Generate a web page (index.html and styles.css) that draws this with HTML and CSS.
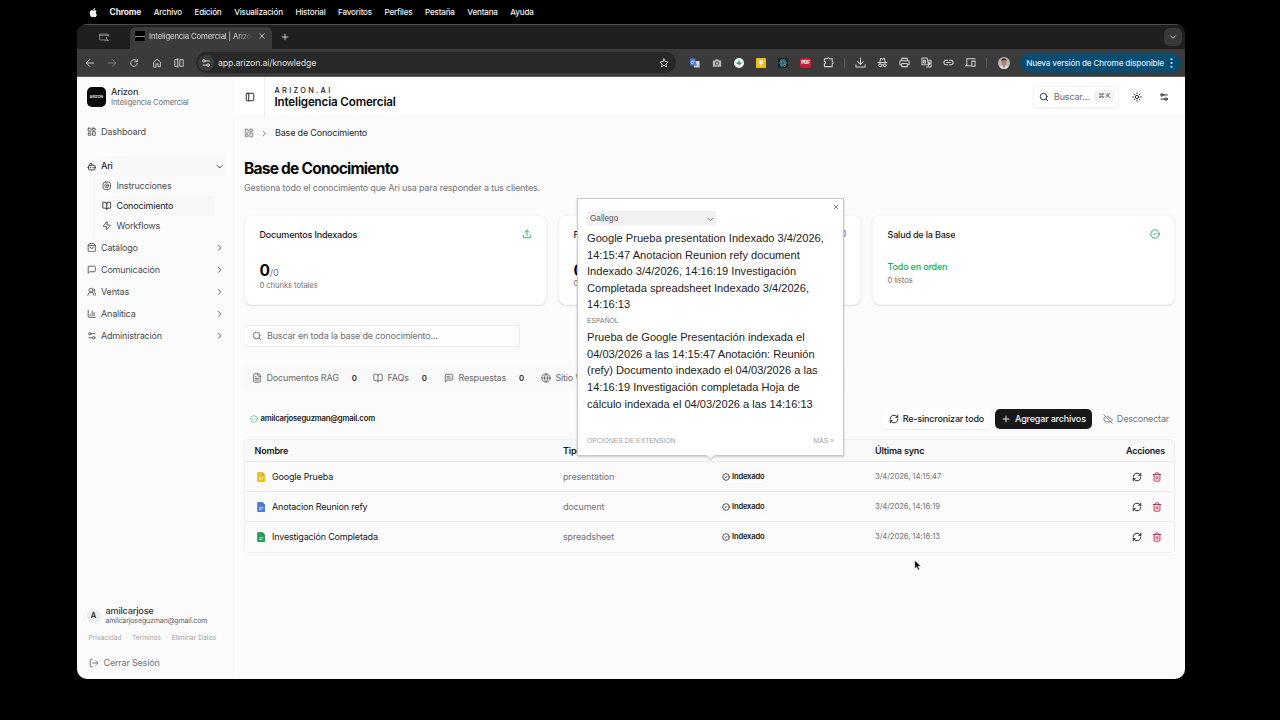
FILE: index.html
```html
<!DOCTYPE html>
<html lang="es">
<head>
  <meta charset="UTF-8" />
  <meta name="viewport" content="width=device-width, initial-scale=1.0"/>
  <title>Inteligencia Comercial | Arizon</title>
  <link rel="stylesheet" href="styles.css">
</head>
<body>
  <svg class="sprite" xmlns="http://www.w3.org/2000/svg">
    <symbol id="grid" viewBox="0 0 24 24"><rect x="3" y="3" width="7" height="9" rx="1"/><rect x="14" y="3" width="7" height="5" rx="1"/><rect x="14" y="12" width="7" height="9" rx="1"/><rect x="3" y="16" width="7" height="5" rx="1"/></symbol>
    <symbol id="bot" viewBox="0 0 24 24"><path d="M12 8V4H8"/><rect x="4" y="8" width="16" height="12" rx="2"/><path d="M2 14h2M20 14h2M15 13v2M9 13v2"/></symbol>
    <symbol id="cpu" viewBox="0 0 24 24"><rect x="2.500" y="2.500" width="19" height="19" rx="6"/><circle cx="12" cy="12" r="5"/><circle cx="12" cy="12" r="1"/></symbol>
    <symbol id="book" viewBox="0 0 24 24"><path d="M12 6v15M3 18a1 1 0 0 1-1-1V4a1 1 0 0 1 1-1h5a4 4 0 0 1 4 4 4 4 0 0 1 4-4h5a1 1 0 0 1 1 1v13a1 1 0 0 1-1 1h-6a3 3 0 0 0-3 3 3 3 0 0 0-3-3z"/></symbol>
    <symbol id="zap" viewBox="0 0 24 24"><path d="M4 14a1 1 0 0 1-.78-1.630l9.900-10.200a.5.5 0 0 1 .86.460l-1.920 6.020A1 1 0 0 0 13 10h7a1 1 0 0 1 .78 1.630l-9.900 10.200a.5.5 0 0 1-.86-.460l1.920-6.020A1 1 0 0 0 11 14z"/></symbol>
    <symbol id="bag" viewBox="0 0 24 24"><path d="M6 2 3 6v14a2 2 0 0 0 2 2h14a2 2 0 0 0 2-2V6l-3-4zM3 6h18M16 10a4 4 0 0 1-8 0"/></symbol>
    <symbol id="msg" viewBox="0 0 24 24"><path d="M21 15a2 2 0 0 1-2 2H7l-4 4V5a2 2 0 0 1 2-2h14a2 2 0 0 1 2 2z"/></symbol>
    <symbol id="msgtext" viewBox="0 0 24 24"><path d="M21 15a2 2 0 0 1-2 2H7l-4 4V5a2 2 0 0 1 2-2h14a2 2 0 0 1 2 2zM13 8H7M17 12H7"/></symbol>
    <symbol id="users" viewBox="0 0 24 24"><path d="M18 21a8 8 0 0 0-16 0"/><circle cx="10" cy="8" r="5"/><path d="M22 20c0-3.370-2-6.500-4-8a5 5 0 0 0-.45-8.300"/></symbol>
    <symbol id="chart" viewBox="0 0 24 24"><path d="M3 3v16a2 2 0 0 0 2 2h16M18 17V9M13 17V5M8 17v-3"/></symbol>
    <symbol id="sliders" viewBox="0 0 24 24"><path d="M20 7h-9M14 17H5"/><circle cx="17" cy="17" r="3"/><circle cx="7" cy="7" r="3"/></symbol>
    <symbol id="right" viewBox="0 0 24 24"><path d="m9 18 6-6-6-6"/></symbol>
    <symbol id="down" viewBox="0 0 24 24"><path d="m6 9 6 6 6-6"/></symbol>
    <symbol id="logout" viewBox="0 0 24 24"><path d="M8 21H4a1 1 0 0 1-1-1V4a1 1 0 0 1 1-1h4M16 17l5-5-5-5M21 12H9"/></symbol>
    <symbol id="panel" viewBox="0 0 24 24"><rect x="3" y="3" width="18" height="18" rx="2"/><path d="M9 3v18"/></symbol>
    <symbol id="search" viewBox="0 0 24 24"><circle cx="11" cy="11" r="8"/><path d="m21 21-4.300-4.300"/></symbol>
    <symbol id="sun" viewBox="0 0 24 24"><circle cx="12" cy="12" r="4"/><path d="M12 2v2M12 20v2M4.900 4.900l1.400 1.400M17.700 17.700l1.400 1.400M2 12h2M20 12h2M6.300 17.700l-1.400 1.400M19.100 4.900l-1.400 1.400"/></symbol>
    <symbol id="upload" viewBox="0 0 24 24"><path d="M21 15v4a2 2 0 0 1-2 2H5a2 2 0 0 1-2-2v-4M17 8l-5-5-5 5M12 3v12"/></symbol>
    <symbol id="check" viewBox="0 0 24 24"><circle cx="12" cy="12" r="10"/><path d="m9 12 2 2 4-4"/></symbol>
    <symbol id="file" viewBox="0 0 24 24"><path d="M15 2H6a2 2 0 0 0-2 2v16a2 2 0 0 0 2 2h12a2 2 0 0 0 2-2V7zM14 2v4a2 2 0 0 0 2 2h4M10 9H8M16 13H8M16 17H8"/></symbol>
    <symbol id="globe" viewBox="0 0 24 24"><circle cx="12" cy="12" r="10"/><path d="M12 2a14.500 14.500 0 0 0 0 20 14.500 14.500 0 0 0 0-20M2 12h20"/></symbol>
    <symbol id="sync" viewBox="0 0 24 24"><path d="M3 12a9 9 0 0 1 9-9 9.750 9.750 0 0 1 6.740 2.740L21 8M21 3v5h-5M21 12a9 9 0 0 1-9 9 9.750 9.750 0 0 1-6.740-2.740L3 16M8 16H3v5"/></symbol>
    <symbol id="trash" viewBox="0 0 24 24"><path d="M3 6h18M19 6v14a2 2 0 0 1-2 2H7a2 2 0 0 1-2-2V6M8 6V4a2 2 0 0 1 2-2h4a2 2 0 0 1 2 2v2M10 11v6M14 11v6"/></symbol>
    <symbol id="plus" viewBox="0 0 24 24"><path d="M5 12h14M12 5v14"/></symbol>
    <symbol id="close" viewBox="0 0 24 24"><path d="m5 5 14 14M19 5 5 19"/></symbol>
    <symbol id="cloudoff" viewBox="0 0 24 24"><path d="m2 2 20 20M5.800 5.800A7 7 0 0 0 9 19h8.500a4.500 4.500 0 0 0 1.300-.2M21.500 16.500A4.500 4.500 0 0 0 17.500 10h-1.800A7 7 0 0 0 10 5.100"/></symbol>
    <symbol id="back" viewBox="0 0 24 24"><path d="M21 12H3M11 4l-8 8 8 8"/></symbol>
    <symbol id="doc" viewBox="0 0 18 22"><path d="M2 0h9l7 7v13a2 2 0 0 1-2 2H2a2 2 0 0 1-2-2V2a2 2 0 0 1 2-2z"/><path class="fold" d="M11 0l7 7h-7z"/><path class="lines" d="M4 11.500h10v2H4zM4 15.500h7v2H4z"/></symbol>
  </svg>

  <nav class="menubar">
    <svg class="apple" viewBox="0 0 24 24"><path d="M17 12.600c0-2.500 2-3.600 2.100-3.700-1.200-1.700-3-1.900-3.600-1.900-1.500-.2-3 .9-3.700.9-.8 0-2-.9-3.200-.9-1.700 0-3.200 1-4.100 2.400-1.700 3-.4 7.500 1.200 10 .9 1.200 1.900 2.500 3.100 2.500 1.300-.1 1.700-.8 3.200-.8s1.900.8 3.200.8 2.200-1.200 3-2.400c.9-1.400 1.300-2.700 1.300-2.800 0 0-2.500-1-2.500-4.100zM14.600 5.300c.7-.8 1.100-2 1-3.100-1 0-2.200.7-2.900 1.500-.6.700-1.200 1.900-1 3 1.100.1 2.200-.6 2.900-1.400z"/></svg>
    <b>Chrome</b>
    <span>Archivo</span>
    <span>Edición</span>
    <span>Visualización</span>
    <span>Historial</span>
    <span>Favoritos</span>
    <span>Perfiles</span>
    <span>Pestaña</span>
    <span>Ventana</span>
    <span>Ayuda</span>
  </nav>

  <div class="window">
    <div class="tabs">
      <div class="tab-group"><svg class="icon" viewBox="0 0 24 24"><path d="M13 19H3a2 2 0 0 1-2-2V5h21v5M1 8h21M14 20h9M18.500 16v-3M16 20c0-5 5-5 5 0"/></svg></div>
      <div class="tab">
        <span class="favicon"></span>
        <span class="tab-title">Inteligencia Comercial | Arizo</span>
        <svg class="icon"><use href="#close"/></svg>
      </div>
      <svg class="icon new-tab"><use href="#plus"/></svg>
      <span class="tab-menu"><svg class="icon"><use href="#down"/></svg></span>
    </div>

    <div class="toolbar">
      <div class="nav">
        <svg class="icon"><use href="#back"/></svg>
        <svg class="icon dim flip"><use href="#back"/></svg>
        <svg class="icon" viewBox="0 0 24 24"><path d="M20 13a8 8 0 1 1-2.400-6.700L20 9M20 3v6h-6"/></svg>
        <svg class="icon" viewBox="0 0 24 24"><path d="M4 21V9.500L12 3l8 6.500V21h-5.500v-7h-5v7z"/></svg>
        <svg class="icon" viewBox="0 0 24 24"><path d="M9 4H2v16h7M15 4h7v16h-7zM9 1.500v21"/></svg>
      </div>
      <div class="address">
        <span class="site"><svg class="icon"><use href="#sliders"/></svg></span>
        <span>app.arizon.ai/knowledge</span>
        <svg class="icon star" viewBox="0 0 24 24"><path d="m12 2.500 2.900 6.400 6.900.8-5.100 4.700 1.400 6.900L12 17.800l-6.100 3.500 1.400-6.900-5.100-4.700 6.900-.8z"/></svg>
      </div>
      <div class="extensions">
        <svg class="ext" viewBox="0 0 24 24"><rect x="9" y="7" width="14" height="16" rx="1.500" fill="#c9ccd1"/><path d="M2 1h10l5 17H2a1.500 1.500 0 0 1-1.500-1.500v-14z" fill="#4c7fe6"/><path d="M11 8H7.500a3 3 0 1 0 1 3H7M14 12h7M17.500 10v2M20 12c-1 4-3 6-4 7" fill="none" stroke="#fff" stroke-width="1.600"/></svg>
        <svg class="ext" viewBox="0 0 24 24"><path d="M2 6h5l2-3h6l2 3h5v15H2z" fill="#b8b8b8"/><circle cx="12" cy="13" r="5" fill="#555"/><circle cx="12" cy="13" r="2.500" fill="#ccc"/></svg>
        <svg class="ext" viewBox="0 0 24 24"><circle cx="12" cy="12" r="12" fill="#f3f6f4"/><path d="M12 6v12M6 12h12" stroke="#2c8765" stroke-width="3"/></svg>
        <svg class="ext" viewBox="0 0 24 24"><rect width="24" height="24" rx="2" fill="#eebd1b"/><circle cx="12" cy="10" r="5" fill="#fff8d8"/><path d="M9.500 16h5v3h-5z" fill="#fff8d8"/></svg>
        <svg class="ext" viewBox="0 0 24 24"><rect width="24" height="24" rx="4" fill="#171b1e"/><g fill="none" stroke="#50a9b8" stroke-width="1.500"><ellipse cx="12" cy="12" rx="10" ry="4"/><ellipse cx="12" cy="12" rx="10" ry="4" transform="rotate(60 12 12)"/><ellipse cx="12" cy="12" rx="10" ry="4" transform="rotate(120 12 12)"/></g><circle cx="12" cy="12" r="2" fill="#50a9b8"/></svg>
        <span class="pdf">PDF</span>
        <svg class="icon" viewBox="0 0 24 24"><path d="M3 4h6c0-3 5-3 5 0h6v6c3 0 3 5 0 5v6H3v-6c4 0 4-5 0-5z"/></svg>
        <i class="sep"></i>
        <svg class="icon" viewBox="0 0 24 24"><path d="M12 2v14M6 10l6 6 6-6M2 17v5h20v-5"/></svg>
        <svg class="icon" viewBox="0 0 24 24"><path d="M2 12h20M6 12l2-9 4 2 4-2 2 9"/><circle cx="7" cy="18" r="3"/><circle cx="17" cy="18" r="3"/><path d="M10 17.500h4"/></svg>
        <svg class="icon" viewBox="0 0 24 24"><path d="M6 8V3h12v5M6 17H2V8h20v9h-4M6 14h12v7H6z"/></svg>
        <svg class="icon" viewBox="0 0 24 24"><path d="M2 2h11l4 15H2zM10 7H5.500v6H10v-3H8M16 7h6v15H12M15 13h6M18 11v2M20 13l-4 6"/></svg>
        <svg class="icon" viewBox="0 0 24 24"><path d="M10 17H7A5 5 0 0 1 7 7h3M14 7h3a5 5 0 0 1 0 10h-3M8 12h8"/></svg>
        <svg class="icon" viewBox="0 0 24 24"><path d="M22 4H4v15M1 19h12M15 9h7v11h-7z"/></svg>
        <i class="sep"></i>
        <svg class="face" viewBox="0 0 24 24"><circle cx="12" cy="12" r="12" fill="#b9b8b5"/><path d="M4 21c1-6 15-6 16 0a12 12 0 0 1-16 0z" fill="#e6e5e3"/><ellipse cx="12" cy="10" rx="5" ry="7" fill="#b77f6b"/><path d="M6 9c0-9 12-9 12 0-2-4-9-4-12 0z" fill="#352923"/><path d="m10 17 2 6 2-6z" fill="#a03535"/></svg>
      </div>
      <div class="update">Nueva versión de Chrome disponible <svg viewBox="0 0 4 16"><circle cx="2" cy="3" r="1.400"/><circle cx="2" cy="8" r="1.400"/><circle cx="2" cy="13" r="1.400"/></svg></div>
    </div>

    <div class="page">
      <aside class="sidebar">
        <div class="brand">
          <span class="logo">ARIZON</span>
          <div>
            <strong>Arizon</strong>
            <small>Inteligencia Comercial</small>
          </div>
        </div>
        <div class="menu">
          <a class="item dash"><svg class="icon"><use href="#grid"/></svg>Dashboard</a>
          <a class="item open"><svg class="icon"><use href="#bot"/></svg>Ari<svg class="icon arrow"><use href="#down"/></svg></a>
          <div class="submenu">
            <a><svg class="icon"><use href="#cpu"/></svg>Instrucciones</a>
            <a class="active"><svg class="icon"><use href="#book"/></svg>Conocimiento</a>
            <a><svg class="icon"><use href="#zap"/></svg>Workflows</a>
          </div>
          <a class="item"><svg class="icon"><use href="#bag"/></svg>Catálogo<svg class="icon arrow"><use href="#right"/></svg></a>
          <a class="item"><svg class="icon"><use href="#msg"/></svg>Comunicación<svg class="icon arrow"><use href="#right"/></svg></a>
          <a class="item"><svg class="icon"><use href="#users"/></svg>Ventas<svg class="icon arrow"><use href="#right"/></svg></a>
          <a class="item"><svg class="icon"><use href="#chart"/></svg>Analítica<svg class="icon arrow"><use href="#right"/></svg></a>
          <a class="item"><svg class="icon"><use href="#sliders"/></svg>Administración<svg class="icon arrow"><use href="#right"/></svg></a>
        </div>
        <div class="account">
          <div class="user">
            <span class="avatar">A</span>
            <div>
              <strong>amilcarjose</strong>
              <small>amilcarjoseguzman@gmail.com</small>
            </div>
          </div>
          <div class="legal"><span>Privacidad</span><span>·</span><span>Términos</span><span>·</span><span>Eliminar Datos</span></div>
          <a class="logout"><svg class="icon"><use href="#logout"/></svg>Cerrar Sesión</a>
        </div>
      </aside>

      <main class="main">
        <header class="header">
          <span class="toggle"><svg class="icon"><use href="#panel"/></svg></span>
          <div class="heading">
            <span>ARIZON.AI</span>
            <strong>Inteligencia Comercial</strong>
          </div>
          <div class="quick"><svg class="icon"><use href="#search"/></svg><span>Buscar...</span><kbd>⌘ K</kbd></div>
          <svg class="icon sun"><use href="#sun"/></svg>
          <svg class="icon"><use href="#sliders"/></svg>
        </header>

        <div class="content">
          <div class="crumbs"><svg class="icon"><use href="#grid"/></svg><svg class="icon chev"><use href="#right"/></svg><span>Base de Conocimiento</span></div>
          <h1>Base de Conocimiento</h1>
          <p class="lead">Gestiona todo el conocimiento que Ari usa para responder a tus clientes.</p>

          <div class="cards">
            <div class="card">
              <div class="card-head">Documentos Indexados<svg class="icon green"><use href="#upload"/></svg></div>
              <div class="number">0<span>/0</span></div>
              <small>0 chunks totales</small>
            </div>
            <div class="card">
              <div class="card-head">FAQs<svg class="icon violet"><use href="#book"/></svg></div>
              <div class="number">0</div>
              <small>0 activas</small>
            </div>
            <div class="card">
              <div class="card-head">Salud de la Base<svg class="icon green"><use href="#check"/></svg></div>
              <div class="status">Todo en orden</div>
              <small>0 listos</small>
            </div>
          </div>

          <div class="search"><svg class="icon"><use href="#search"/></svg>Buscar en toda la base de conocimiento...</div>

          <div class="sections">
            <div class="s-docs"><svg class="icon"><use href="#file"/></svg>Documentos RAG<b>0</b></div>
            <div class="s-faqs"><svg class="icon"><use href="#book"/></svg>FAQs<b>0</b></div>
            <div class="s-resp"><svg class="icon"><use href="#msgtext"/></svg>Respuestas<b>0</b></div>
            <div><svg class="icon"><use href="#globe"/></svg>Sitio Web</div>
          </div>

          <div class="actions">
            <span class="mail"><svg class="icon"><use href="#check"/></svg>amilcarjoseguzman@gmail.com</span>
            <span class="btn white"><svg class="icon"><use href="#sync"/></svg>Re-sincronizar todo</span>
            <span class="btn black"><svg class="icon"><use href="#plus"/></svg>Agregar archivos</span>
            <span class="btn ghost"><svg class="icon"><use href="#cloudoff"/></svg>Desconectar</span>
          </div>

          <div class="table">
            <div class="row head"><span>Nombre</span><span>Tipo</span><span>Estado</span><span>Última sync</span><span class="ops">Acciones</span></div>
            <div class="row">
              <span class="name"><svg class="doc yellow"><use href="#doc"/></svg>Google Prueba</span>
              <span class="type">presentation</span>
              <span class="state"><span class="badge"><svg class="icon"><use href="#check"/></svg>Indexado</span></span>
              <span class="date">3/4/2026, 14:15:47</span>
              <span class="ops"><svg class="icon"><use href="#sync"/></svg><svg class="icon red"><use href="#trash"/></svg></span>
            </div>
            <div class="row">
              <span class="name"><svg class="doc blue"><use href="#doc"/></svg>Anotacion Reunion refy</span>
              <span class="type">document</span>
              <span class="state"><span class="badge"><svg class="icon"><use href="#check"/></svg>Indexado</span></span>
              <span class="date">3/4/2026, 14:16:19</span>
              <span class="ops"><svg class="icon"><use href="#sync"/></svg><svg class="icon red"><use href="#trash"/></svg></span>
            </div>
            <div class="row">
              <span class="name"><svg class="doc sheet"><use href="#doc"/></svg>Investigación Completada</span>
              <span class="type">spreadsheet</span>
              <span class="state"><span class="badge"><svg class="icon"><use href="#check"/></svg>Indexado</span></span>
              <span class="date">3/4/2026, 14:16:13</span>
              <span class="ops"><svg class="icon"><use href="#sync"/></svg><svg class="icon red"><use href="#trash"/></svg></span>
            </div>
          </div>
        </div>
      </main>
    </div>
  </div>

  <div class="translate">
    <svg class="icon dismiss"><use href="#close"/></svg>
    <div class="lang">Gallego<svg class="icon"><use href="#down"/></svg></div>
    <p>Google Prueba presentation Indexado 3/4/2026,<br>14:15:47 Anotacion Reunion refy document<br>Indexado 3/4/2026, 14:16:19 Investigación<br>Completada spreadsheet Indexado 3/4/2026,<br>14:16:13</p>
    <div class="target">ESPAÑOL</div>
    <p>Prueba de Google Presentación indexada el<br>04/03/2026 a las 14:15:47 Anotación: Reunión<br>(refy) Documento indexado el 04/03/2026 a las<br>14:16:19 Investigación completada Hoja de<br>cálculo indexada el 04/03/2026 a las 14:16:13</p>
    <div class="foot"><span>OPCIONES DE EXTENSIÓN</span><span>MÁS »</span></div>
  </div>

  <svg class="cursor" viewBox="0 0 12 18"><path d="M1 1v13l3-2.800 2 4.800 2.400-1-2-4.700h4.200z"/></svg>
</body>
</html>
```

FILE: styles.css
```css
* {
  box-sizing: border-box;
}
body {
  margin: 0;
  width: 1280px;
  height: 720px;
  overflow: hidden;
  background: #000;
  font-family: Inter, "Liberation Sans", sans-serif;
  font-size: 9px;
  line-height: 12px;
  color: #18181b;
  position: relative;
}
.sprite {
  display: none;
}
svg {
  flex: none;
}
.icon {
  width: 10px;
  height: 10px;
  fill: none;
  stroke: currentColor;
  stroke-width: 2.2;
  stroke-linecap: round;
  stroke-linejoin: round;
}

/* menu bar */
.menubar {
  height: 24px;
  padding-left: 88px;
  display: flex;
  align-items: center;
  gap: 12.6px;
  color: #f2f2f2;
  font-size: 8.1px;
  font-weight: 500;
  letter-spacing: -.2px;
}
.menubar b {
  font-weight: 700;
  font-size: 8.4px;
  letter-spacing: -.15px;
}
.apple {
  width: 11px;
  height: 11px;
  fill: #fff;
  margin-right: -2px;
}

/* browser */
.window {
  width: 1108px;
  height: 655px;
  margin-left: 77px;
  border-radius: 10px;
  overflow: hidden;
  background: #3b3b3b;
  letter-spacing: -.18px;
}
.tabs {
  height: 25px;
  background: #1f1f1f;
  border-top: 1px solid #4d4d4d;
  display: flex;
  align-items: center;
  color: #d5d5d5;
}
.tab-group {
  width: 53px;
  text-align: center;
  line-height: 0;
  color: #8d8d8d;
}
.tab {
  width: 142px;
  height: 22px;
  align-self: flex-end;
  background: #3b3b3b;
  border-radius: 6px 6px 0 0;
  display: flex;
  align-items: center;
  padding: 0 6px 4px 5px;
  font-size: 7.8px;
}
.favicon {
  width: 10px;
  height: 10px;
  border-radius: 1px;
  background: linear-gradient(#050505 45%, #8a8a8a 45%, #8a8a8a 55%, #050505 55%);
  margin-right: 4px;
}
.tab-title {
  width: 105px;
  white-space: nowrap;
  -webkit-mask-image: linear-gradient(90deg, #000 83%, transparent 99%);
}
.tab .icon {
  width: 8px;
  height: 8px;
  margin-left: 4px;
  stroke-width: 2.5;
}
.new-tab {
  margin-left: 8px;
}
.tab-menu {
  width: 18px;
  height: 18px;
  border-radius: 6px;
  background: #383838;
  margin: 0 3px 0 auto;
  display: flex;
  align-items: center;
  justify-content: center;
}
.toolbar {
  height: 28px;
  display: flex;
  align-items: center;
  color: #d0d0d0;
  border-bottom: 1px solid #5a5a5a;
}
.nav {
  display: flex;
  gap: 12.2px;
  padding-left: 8px;
  width: 119px;
}
.dim {
  color: #828282;
}
.flip {
  transform: scaleX(-1);
}
.address {
  width: 480px;
  height: 21px;
  border-radius: 11px;
  background: #282828;
  display: flex;
  align-items: center;
  font-size: 8.8px;
  color: #dedede;
  padding: 0 7px 0 2px;
}
.site {
  width: 16px;
  height: 16px;
  border-radius: 8px;
  background: #3b3b3b;
  display: flex;
  align-items: center;
  justify-content: center;
  margin-right: 4px;
}
.star {
  margin-left: auto;
}
.extensions {
  display: flex;
  align-items: center;
  gap: 12.1px;
  padding-left: 13.5px;
}
.extensions .icon {
  width: 11px;
  height: 11px;
  margin: 0 -.5px;
}
.ext {
  width: 10px;
  height: 10px;
}
.pdf {
  width: 11px;
  height: 10px;
  border-radius: 2px;
  background: #c61f3e;
  color: #fff;
  font-size: 4.5px;
  font-weight: 800;
  line-height: 10px;
  text-align: center;
}
.sep {
  width: 1px;
  height: 10px;
  margin: 0 -1.5px;
  background: #5b5b5b;
}
.face {
  width: 12px;
  height: 12px;
}
.update {
  height: 20px;
  border-radius: 10px;
  background: #064c70;
  color: #d0eafd;
  margin: 0 4px 0 auto;
  padding: 0 8px 0 6px;
  display: flex;
  align-items: center;
  gap: 6px;
  font-size: 8.2px;
  font-weight: 500;
  white-space: nowrap;
}
.update svg {
  width: 3px;
  height: 12px;
  fill: #d0eafd;
}
.page {
  height: 602px;
  display: flex;
  background: #fbfbfb;
}

/* sidebar */
.sidebar {
  width: 157px;
  padding: 10px 10px 0 9.5px;
  display: flex;
  flex-direction: column;
  border-right: 1px solid #f7f7f7;
  color: #4b4b4f;
}
.brand, .user {
  display: flex;
  align-items: center;
  gap: 5px;
  height: 20px;
}
.brand strong, .user strong {
  display: block;
  font-size: 9.1px;
  font-weight: 500;
  line-height: 10px;
  color: #333336;
}
.brand small, .user small {
  display: block;
  font-size: 7.8px;
  line-height: 10px;
  color: #75757a;
}
.logo {
  width: 19.5px;
  height: 20px;
  border-radius: 5px;
  background: #0a0a0a;
  color: #ddd;
  font-size: 3.8px;
  font-weight: 700;
  line-height: 20px;
  text-align: center;
}
.menu {
  padding-top: 15px;
  flex: 1;
}
.item {
  display: flex;
  align-items: center;
  gap: 5px;
  height: 20px;
  margin: 0 -2px 2.1px 0;
}
.item .icon, .submenu .icon {
  width: 9.5px;
  height: 9.5px;
}
.item.dash {
  margin-bottom: 14.3px;
}
.item.open {
  color: #27272a;
  font-weight: 500;
  background: linear-gradient(90deg, transparent, #f8f8f8 30%);
  margin-bottom: 0;
}
.item .arrow {
  margin-left: auto;
  margin-right: 1px;
}
.submenu {
  margin: 0 0 2px 6px;
  border-left: 1px solid #f6f6f6;
  padding-left: 8.5px;
}
.submenu a {
  display: flex;
  align-items: center;
  gap: 5px;
  height: 19.8px;
}
.submenu .active {
  color: #232326;
  background: linear-gradient(90deg, transparent, #f7f7f7 25%);
  margin-right: 9px;
}
.account {
  height: 73.5px;
}
.user {
  padding-top: 1px;
}
.avatar {
  width: 14px;
  height: 14px;
  border-radius: 7px;
  background: #ededed;
  color: #222;
  font-size: 7.5px;
  font-weight: 600;
  line-height: 14px;
  text-align: center;
}
.user small {
  font-size: 7.1px;
  color: #636367;
}
.legal {
  display: flex;
  gap: 4.4px;
  padding: 6px 0 0 2px;
  font-size: 6.6px;
  letter-spacing: 0;
  color: #a3a3a7;
}
.logout {
  display: flex;
  align-items: center;
  gap: 5px;
  padding: 13px 0 0 2px;
  color: #737377;
}

/* main */
.main {
  flex: 1;
}
.header {
  height: 40px;
  background: #fff;
  display: flex;
  align-items: center;
  padding-right: 16px;
  border-bottom: 1px solid #f8f8f8;
}
.toggle {
  width: 31px;
  height: 40px;
  border-right: 1px solid #ececec;
  display: flex;
  align-items: center;
  justify-content: center;
  padding-left: 2px;
}
.heading {
  padding: 1px 0 0 9.5px;
  flex: 1;
}
.heading span {
  display: block;
  font-size: 7.4px;
  font-weight: 500;
  letter-spacing: 2.3px;
  line-height: 10px;
}
.heading strong {
  display: block;
  font-size: 11.6px;
  font-weight: 600;
  line-height: 13px;
  letter-spacing: -.15px;
  color: #09090b;
}
.quick {
  width: 86px;
  height: 22px;
  border: 1px solid #f3f3f3;
  border-radius: 4px;
  box-shadow: 0 1px 1px #f2f2f2;
  display: flex;
  align-items: center;
  gap: 5px;
  padding-left: 5px;
  color: #6b6b70;
  margin-right: 13px;
}
.quick .icon {
  color: #222;
}
.quick kbd {
  font: 500 6.5px/13px Inter, "DejaVu Sans", sans-serif;
  background: #f3f3f3;
  border-radius: 4px;
  padding: 0 4px;
  white-space: nowrap;
}
.sun {
  margin-right: 17px;
}
.content {
  padding: 10px 10px 0 10px;
}
.crumbs {
  display: flex;
  align-items: center;
  height: 12px;
  gap: 5px;
  color: #77777b;
}
.crumbs span {
  color: #27272a;
  margin-left: 1px;
}
.chev {
  width: 9px;
  height: 9px;
  margin-left: 1px;
}
h1 {
  margin: 20px 0 0;
  font-size: 15.5px;
  line-height: 20px;
  font-weight: 700;
  letter-spacing: -.75px;
  color: #09090b;
}
.lead {
  margin: 3px 0 0;
  color: #737378;
}
.cards {
  display: grid;
  grid-template-columns: repeat(3, 1fr);
  gap: 11px;
  margin-top: 21px;
}
.card {
  height: 90px;
  background: #fff;
  border: 1px solid #f5f5f5;
  border-radius: 8px;
  box-shadow: 0 1px 2px rgba(0,0,0,.1);
  padding: 13px 14px 13px 14.5px;
}
.card-head {
  display: flex;
  justify-content: space-between;
  font-weight: 500;
  height: 12px;
}
.green {
  color: #23a55a;
}
.violet {
  color: #6a5be8;
}
.number {
  margin-top: 20px;
  font-size: 15.6px;
  line-height: 20px;
  font-weight: 700;
  color: #09090b;
}
.number span {
  font-size: 9.1px;
  font-weight: 400;
  color: #737378;
}
.card small {
  display: block;
  font-size: 7.7px;
  line-height: 10px;
  color: #737378;
  letter-spacing: -.1px;
}
.number + small {
  margin-top: -2.5px;
}
.status {
  margin-top: 19px;
  color: #18a94d;
  font-weight: 500;
  line-height: 13px;
  margin-bottom: 3px;
}
.search {
  width: 276px;
  height: 22px;
  margin-top: 20px;
  margin-bottom: 19px;
  border: 1px solid #ededed;
  border-left-color: #f8f8f8;
  border-radius: 4px;
  background: #fdfdfd;
  display: flex;
  align-items: center;
  gap: 5px;
  padding-left: 7px;
  color: #6f6f74;
}
.sections {
  display: flex;
  height: 24px;
  padding-left: 7.5px;
  color: #69696d;
  background: linear-gradient(90deg, #f9f9f9, #fbfbfb);
}
.sections div {
  display: flex;
  align-items: center;
  gap: 5px;
}
.sections b {
  color: #27272a;
  font-size: 7.8px;
  font-weight: 600;
  margin-left: 8px;
}
.s-docs {
  width: 121px;
}
.s-faqs {
  width: 71px;
}
.s-resp {
  width: 97px;
}
.actions {
  display: flex;
  align-items: center;
  height: 20px;
  margin-top: 19px;
}
.mail {
  flex: 1;
  display: flex;
  align-items: center;
  gap: 3px;
  padding-left: 5.5px;
  font-size: 7.7px;
  font-weight: 600;
}
.mail .icon {
  width: 8px;
  height: 8px;
  color: #57c784;
}
.btn {
  display: flex;
  align-items: center;
  gap: 4px;
  height: 20px;
  font-weight: 500;
  white-space: nowrap;
}
.white {
  background: #fff;
  border-radius: 4px;
  box-shadow: 0 1px 1px #eee;
  padding: 0 6px;
  margin-right: 5px;
}
.black {
  background: #18181b;
  color: #f5f5f5;
  border-radius: 5px;
  padding: 0 6px;
}
.ghost {
  color: #77777b;
  padding: 0 6px 0 11px;
  font-weight: 400;
}
.table {
  margin-top: 10px;
  border: 1px solid #f0f0f0;
  border-radius: 5px;
  overflow: hidden;
}
.row {
  display: grid;
  grid-template-columns: 308.5px 158px 154px 1fr 60px;
  align-items: center;
  height: 30.2px;
  padding: 0 9px 0 9.5px;
  border-top: 1px solid #ececec;
}
.head {
  height: 21px;
  background: #f9f9f9;
  font-weight: 600;
  border-top: 0;
}
.name {
  display: flex;
  align-items: center;
  gap: 7px;
  padding-left: 2px;
}
.doc {
  width: 8.5px;
  height: 10px;
  fill: currentColor;
}
.fold {
  fill: rgba(0,0,0,.15);
}
.lines {
  fill: rgba(255,255,255,.65);
}
.yellow {
  color: #f3bc27;
}
.blue {
  color: #4b7de0;
}
.sheet {
  color: #23a05a;
}
.type {
  color: #737378;
}
.state {
  display: flex;
}
.badge {
  display: flex;
  align-items: center;
  gap: 2px;
  height: 12px;
  padding: 0 3px 0 1px;
  background: #fcfcfc;
  border-radius: 3px;
  box-shadow: 0 0 1px #ddd;
  font-size: 7.6px;
  font-weight: 600;
}
.badge .icon {
  width: 8px;
  height: 8px;
}
.date {
  font-size: 7.7px;
  letter-spacing: -.1px;
  color: #737378;
}
.ops {
  display: flex;
  justify-content: flex-end;
  gap: 10px;
}
.ops .icon:last-child {
  margin-right: 3.5px;
}
.red {
  color: #c02349;
}

/* translation popup */
.translate {
  position: absolute;
  left: 577px;
  top: 198px;
  width: 267px;
  height: 258px;
  background: #fff;
  border: 1px solid #c8c8c8;
  box-shadow: 0 1px 2px rgba(0,0,0,.2);
  padding: 12px 9px 0;
  font-family: "Liberation Sans", Arial, sans-serif;
  color: #222;
}
.translate::after {
  content: "";
  position: absolute;
  left: 129px;
  bottom: -4px;
  width: 6px;
  height: 6px;
  background: #fff;
  border: solid #c8c8c8;
  border-width: 0 1px 1px 0;
  transform: rotate(45deg);
}
.dismiss {
  position: absolute;
  top: 5px;
  right: 4px;
  width: 6px;
  height: 6px;
  color: #888;
  stroke-width: 4;
}
.lang {
  width: 129px;
  height: 15px;
  background: #f1f1f1;
  display: flex;
  align-items: center;
  justify-content: space-between;
  padding: 1px 1px 0 3px;
  font-size: 8.2px;
  color: #555;
}
.lang .icon {
  width: 9px;
  height: 9px;
}
.translate p {
  margin: 4px 0 0;
  font-size: 11.1px;
  line-height: 16.6px;
  white-space: nowrap;
}
.target {
  font-size: 6.8px;
  line-height: 12px;
  margin-top: 2px;
  color: #777;
}
.target + p {
  margin-top: 2.3px;
}
.foot {
  display: flex;
  justify-content: space-between;
  margin-top: 22.5px;
  font-size: 6.8px;
  color: #a0a0a0;
}
.cursor {
  position: absolute;
  left: 914px;
  top: 559px;
  width: 8px;
  height: 13px;
  fill: #000;
  stroke: #fff;
  stroke-width: 1;
}
```
